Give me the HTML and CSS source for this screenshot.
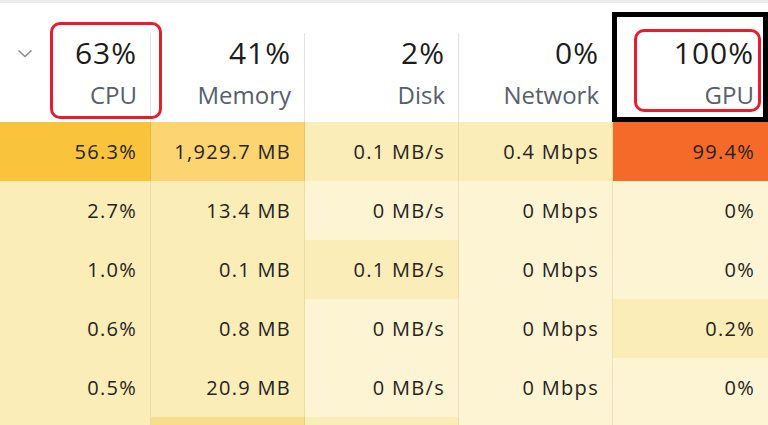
FILE: index.html
```html
<!DOCTYPE html>
<html lang="en">
<head>
<meta charset="utf-8">
<title>Task Manager - Processes</title>
<link rel="stylesheet" href="styles.css">
</head>
<body>
<div class="tm">
  <div class="grid head">
    <div class="hcell first">
      <svg class="chev" width="16" height="9" viewBox="0 0 16 9"><polyline points="1.5,1.5 8,7.5 14.5,1.5" fill="none" stroke="#8c8c8c" stroke-width="1.6"/></svg>
      <div class="htext">
        <div class="pct">63%</div>
        <div class="lbl">CPU</div>
      </div>
    </div>
    <div class="hcell"><div class="htext"><div class="pct">41%</div><div class="lbl">Memory</div></div></div>
    <div class="hcell"><div class="htext"><div class="pct">2%</div><div class="lbl">Disk</div></div></div>
    <div class="hcell"><div class="htext"><div class="pct">0%</div><div class="lbl">Network</div></div></div>
    <div class="hcell"><div class="htext"><div class="pct">100%</div><div class="lbl">GPU</div></div></div>
  </div>

  <div class="grid row">
    <div class="cell h-cpu">56.3%</div>
    <div class="cell h-mem">1,929.7 MB</div>
    <div class="cell h-light">0.1 MB/s</div>
    <div class="cell h-light">0.4 Mbps</div>
    <div class="cell h-gpu">99.4%</div>
  </div>
  <div class="grid row">
    <div class="cell h-light">2.7%</div>
    <div class="cell h-light">13.4 MB</div>
    <div class="cell h-pale">0 MB/s</div>
    <div class="cell h-pale">0 Mbps</div>
    <div class="cell h-pale">0%</div>
  </div>
  <div class="grid row">
    <div class="cell h-light">1.0%</div>
    <div class="cell h-light">0.1 MB</div>
    <div class="cell h-light">0.1 MB/s</div>
    <div class="cell h-pale">0 Mbps</div>
    <div class="cell h-pale">0%</div>
  </div>
  <div class="grid row">
    <div class="cell h-light">0.6%</div>
    <div class="cell h-light">0.8 MB</div>
    <div class="cell h-pale">0 MB/s</div>
    <div class="cell h-pale">0 Mbps</div>
    <div class="cell h-light">0.2%</div>
  </div>
  <div class="grid row">
    <div class="cell h-light">0.5%</div>
    <div class="cell h-light">20.9 MB</div>
    <div class="cell h-pale">0 MB/s</div>
    <div class="cell h-pale">0 Mbps</div>
    <div class="cell h-pale">0%</div>
  </div>
  <div class="grid row row-partial">
    <div class="cell h-light"></div>
    <div class="cell h-warm"></div>
    <div class="cell h-light"></div>
    <div class="cell h-pale"></div>
    <div class="cell h-pale"></div>
  </div>

  <div class="mark mark-cpu"></div>
  <div class="focus-gpu"></div>
  <div class="mark mark-gpu"></div>
</div>
</body>
</html>
```

FILE: styles.css
```css
* { box-sizing: border-box; }

html, body {
  margin: 0;
  padding: 0;
  background: #ffffff;
}

body {
  width: 768px;
  height: 425px;
  overflow: hidden;
  font-family: "Open Sans", "Noto Sans", sans-serif;
}

.tm {
  position: relative;
  border-top: 3px solid #ececec;
}

.grid {
  display: grid;
  grid-template-columns: 151px 154px 154px 154px 155px;
}

/* header */
.head {
  height: 119px;
  background: #ffffff;
}

.hcell {
  margin-top: 30px;
  border-right: 1px solid #e2e2e2;
  padding: 5px 13px 0 0;
  display: flex;
  justify-content: flex-end;
}

.hcell:last-child {
  border-right: none;
  padding-right: 14px;
}

.hcell.first {
  justify-content: space-between;
}

.chev {
  margin: 11px 0 0 17px;
  display: block;
}

.htext {
  display: flex;
  flex-direction: column;
  align-items: flex-end;
}

.pct {
  font-size: 30px;
  line-height: 30px;
  letter-spacing: 1px;
  color: #1c1c1c;
}

.lbl {
  font-size: 24px;
  line-height: 24px;
  margin-top: 15px;
  color: #56606c;
}

/* data rows */
.row {
  height: 59px;
}

.row-partial {
  height: 8px;
}

.cell {
  font-size: 20px;
  line-height: 59px;
  letter-spacing: 1.3px;
  text-align: right;
  padding-right: 13px;
  color: #26231c;
  border-right: 1px solid rgba(160, 130, 50, 0.16);
  white-space: nowrap;
}

.cell:last-child {
  border-right: none;
}

.h-pale  { background: #fdf4d4; }
.h-light { background: #faedb8; }
.h-warm  { background: #f9dc8c; }
.h-mem   { background: #fcd471; }
.h-cpu   { background: #f9c33c; }
.h-gpu   { background: #f56a29; }

/* annotations drawn over the screenshot */
.mark {
  position: absolute;
  border: 3px solid #e61e2b;
  border-radius: 10px;
}

.mark-cpu {
  left: 50px;
  top: 19px;
  width: 112px;
  height: 97px;
}

.mark-gpu {
  left: 634px;
  top: 26px;
  width: 127px;
  height: 83px;
}

.focus-gpu {
  position: absolute;
  left: 612px;
  top: 9px;
  width: 156px;
  height: 110px;
  border: 5px solid #000000;
}
```
